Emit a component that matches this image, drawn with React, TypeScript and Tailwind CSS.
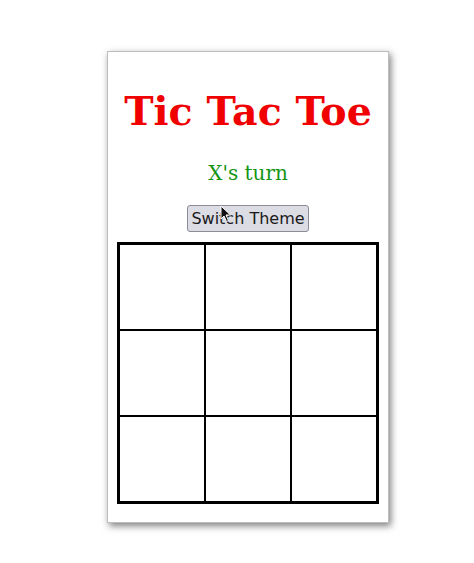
import React from "react";

export default function App() {
  const cells = Array.from({ length: 9 });
  return (
    <div className="w-[474px] h-[563px] bg-white relative overflow-hidden">
      <div className="pt-[51px] pl-[107px]">
        <div className="w-[282px] h-[472px] bg-white border border-[#bdbdbd] shadow-[2px_3px_7px_rgba(0,0,0,0.5)] px-[9px] flex flex-col items-center">
          <h1
            className="mt-[37px] h-[44px] leading-[44px] text-[39.5px] font-bold text-[#f00000] whitespace-nowrap"
            style={{ fontFamily: '"DejaVu Serif", serif' }}
          >
            Tic Tac Toe
          </h1>
          <div
            className="mt-[28px] h-[24px] leading-[24px] text-[20px] text-[#149414]"
            style={{ fontFamily: '"DejaVu Serif", serif' }}
          >
            X's turn
          </div>
          <div className="mt-[20px] relative">
            <button
              className="h-[27px] px-[3px] bg-[#dcdce4] border border-[#8c8c98] rounded-[3px] text-[16px] leading-[20px] text-[#1a1a1a]"
              style={{ fontFamily: '"DejaVu Sans", sans-serif' }}
            >
              Switch Theme
            </button>
            <svg
              className="absolute left-[33px] top-[0px]"
              width="12"
              height="18"
              viewBox="0 0 12 18"
            >
              <path
                d="M1 1 L1 14 L4 11 L6.5 16.5 L8.5 15.5 L6 10 L10.5 10 Z"
                fill="#111"
                stroke="#fff"
                strokeWidth="1"
                strokeLinejoin="round"
              />
            </svg>
          </div>
          <div className="mt-[10px] border-[3px] border-black bg-black grid grid-cols-[84px_84px_84px] grid-rows-[84px_84px_84px] gap-[2px]">
            {cells.map((_, i) => (
              <div key={i} className="bg-white" />
            ))}
          </div>
        </div>
      </div>
    </div>
  );
}
